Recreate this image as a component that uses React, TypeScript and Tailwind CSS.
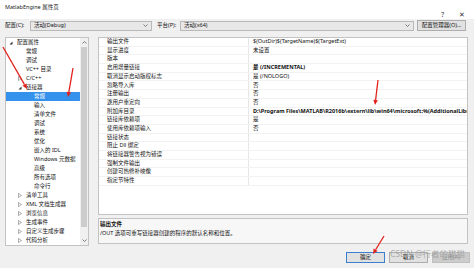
import React from "react";

type TreeItem = { t: string; level: 0 | 1 | 2; exp?: "open" | "closed"; sel?: boolean };

const tree: TreeItem[] = [
  { t: "配置属性", level: 0, exp: "open" },
  { t: "常规", level: 1 },
  { t: "调试", level: 1 },
  { t: "VC++ 目录", level: 1 },
  { t: "C/C++", level: 1, exp: "closed" },
  { t: "链接器", level: 1, exp: "open" },
  { t: "常规", level: 2, sel: true },
  { t: "输入", level: 2 },
  { t: "清单文件", level: 2 },
  { t: "调试", level: 2 },
  { t: "系统", level: 2 },
  { t: "优化", level: 2 },
  { t: "嵌入的 IDL", level: 2 },
  { t: "Windows 元数据", level: 2 },
  { t: "高级", level: 2 },
  { t: "所有选项", level: 2 },
  { t: "命令行", level: 2 },
  { t: "清单工具", level: 1, exp: "closed" },
  { t: "XML 文档生成器", level: 1, exp: "closed" },
  { t: "浏览信息", level: 1, exp: "closed" },
  { t: "生成事件", level: 1, exp: "closed" },
  { t: "自定义生成步骤", level: 1, exp: "closed" },
  { t: "代码分析", level: 1, exp: "closed" },
];

const props: { n: string; v: string; b?: boolean }[] = [
  { n: "输出文件", v: "$(OutDir)$(TargetName)$(TargetExt)" },
  { n: "显示进度", v: "未设置" },
  { n: "版本", v: "" },
  { n: "启用增量链接", v: "是 (/INCREMENTAL)", b: true },
  { n: "取消显示启动版权标志", v: "是 (/NOLOGO)" },
  { n: "忽略导入库", v: "否" },
  { n: "注册输出", v: "否" },
  { n: "逐用户重定向", v: "否" },
  {
    n: "附加库目录",
    v: "D:\\Program Files\\MATLAB\\R2016b\\extern\\lib\\win64\\microsoft;%(AdditionalLibraryDirectories)",
    b: true,
  },
  { n: "链接库依赖项", v: "是" },
  { n: "使用库依赖项输入", v: "否" },
  { n: "链接状态", v: "" },
  { n: "阻止 Dll 绑定", v: "" },
  { n: "将链接器警告视为错误", v: "" },
  { n: "强制文件输出", v: "" },
  { n: "创建可热修补映像", v: "" },
  { n: "指定节特性", v: "" },
];

const indent = ["pl-[3px]", "pl-[12px]", "pl-[20px]"];

function Chevron({ up = false }: { up?: boolean }) {
  return (
    <svg width="5" height="3" viewBox="0 0 5 3" className="block">
      <polyline
        points={up ? "0.5,2.5 2.5,0.5 4.5,2.5" : "0.5,0.5 2.5,2.5 4.5,0.5"}
        fill="none"
        stroke="#606060"
        strokeWidth="0.8"
      />
    </svg>
  );
}

function Expander({ kind }: { kind?: "open" | "closed" }) {
  if (!kind) return <span className="w-[8px] shrink-0" />;
  return (
    <span className="w-[8px] shrink-0 flex items-center">
      {kind === "open" ? (
        <svg width="4" height="4" viewBox="0 0 4 4">
          <polygon points="3.5,0.5 3.5,3.5 0.5,3.5" fill="#333" />
        </svg>
      ) : (
        <svg width="4" height="5" viewBox="0 0 4 5">
          <polygon points="0.5,0.5 3.5,2.5 0.5,4.5" fill="none" stroke="#777" strokeWidth="0.6" />
        </svg>
      )}
    </span>
  );
}

function arrow(x1: number, y1: number, x2: number, y2: number) {
  const dx = x2 - x1;
  const dy = y2 - y1;
  const len = Math.hypot(dx, dy);
  const ux = dx / len;
  const uy = dy / len;
  const hl = 5;
  const hw = 2.3;
  const bx = x2 - ux * hl;
  const by = y2 - uy * hl;
  const p1 = `${bx - uy * hw},${by + ux * hw}`;
  const p2 = `${bx + uy * hw},${by - ux * hw}`;
  return (
    <g key={`${x1}-${y1}`}>
      <line x1={x1} y1={y1} x2={bx} y2={by} stroke="#e3211b" strokeWidth="1.3" />
      <polygon points={`${x2},${y2} ${p1} ${p2}`} fill="#e3211b" />
    </g>
  );
}

export default function App() {
  return (
    <div className="relative w-[474px] h-[268px] overflow-hidden bg-[#f0f0f0] text-[5.5px] leading-none text-[#111] font-['Noto_Sans','Noto_Sans_CJK_SC',sans-serif]">
      {/* title bar */}
      <div className="h-[19px] bg-white flex justify-between pl-[5px] pr-[9px]">
        <div className="pt-[5px] text-[5.5px] text-[#222]">MatlabEngine 属性页</div>
        <div className="flex gap-[15px] pt-[12px] text-[6.5px] text-[#333]">
          <span>?</span>
          <span>✕</span>
        </div>
      </div>

      {/* config row */}
      <div className="flex items-center h-[11px] mt-[1px] pl-[5px]">
        <span className="w-[25px]">配置(C):</span>
        <div className="w-[122px] h-[10px] border border-[#b9b9b9] bg-[#e8e8e8] flex items-center justify-between pl-[3px] pr-[3px]">
          <span>活动(Debug)</span>
          <Chevron />
        </div>
        <span className="w-[23px] ml-[5px]">平台(P):</span>
        <div className="w-[234px] h-[10px] border border-[#b9b9b9] bg-[#e8e8e8] flex items-center justify-between pl-[3px] pr-[3px]">
          <span>活动(x64)</span>
          <Chevron />
        </div>
        <div className="w-[49px] h-[11px] ml-[3px] border border-[#adadad] bg-[#e1e1e1] flex items-center justify-center">
          配置管理器(O)...
        </div>
      </div>

      {/* main */}
      <div className="flex mt-[6px] pl-[5px] gap-[9px]">
        {/* tree */}
        <div className="w-[84px] h-[209px] border border-[#c3c3c3] bg-white flex">
          <div className="flex-1 flex flex-col">
            {tree.map((it, i) => (
              <div
                key={i}
                className={`h-[9px] shrink-0 flex items-center whitespace-nowrap ${indent[it.level]} ${
                  it.sel ? "bg-[#3491ec] text-white" : ""
                }`}
              >
                <Expander kind={it.exp} />
                <span>{it.t}</span>
              </div>
            ))}
          </div>
          <div className="w-[8px] bg-[#f0f0f0] flex flex-col items-center">
            <div className="h-[9px] flex items-center">
              <Chevron up />
            </div>
            <div className="w-[6px] h-[180px] bg-[#cdcdcd]" />
            <div className="flex-1" />
            <div className="h-[9px] flex items-center">
              <Chevron />
            </div>
          </div>
        </div>

        {/* right */}
        <div className="w-[370px] flex flex-col">
          <div className="h-[178px] border border-[#c3c3c3] bg-white flex flex-col overflow-hidden">
            {props.map((p, i) => (
              <div key={i} className="h-[8.7px] shrink-0 flex border-b border-[#f2f2f2]">
                <div className="w-[150px] shrink-0 pl-[8px] flex items-center border-r border-[#e6e6e6] whitespace-nowrap">
                  {p.n}
                </div>
                <div
                  className={`flex-1 pl-[4px] flex items-center whitespace-nowrap overflow-hidden ${
                    p.b ? "font-bold" : ""
                  }`}
                >
                  {p.v}
                </div>
              </div>
            ))}
          </div>
          <div className="h-[3px]" />
          <div className="h-[26px] border border-[#c3c3c3] bg-[#f7f7f7] pl-[1px] pt-[3px] flex flex-col gap-[3px]">
            <span className="font-bold">输出文件</span>
            <span>/OUT 选项可重写链接器创建的程序的默认名称和位置。</span>
          </div>
        </div>
      </div>

      {/* buttons */}
      <div className="flex justify-end gap-[4px] pr-[4px] mt-[6px]">
        <div className="w-[39px] h-[11px] border border-[#3c7fd0] bg-[#e1e1e1] flex items-center justify-center">
          确定
        </div>
        <div className="w-[39px] h-[11px] border border-[#adadad] bg-[#e1e1e1] flex items-center justify-center">
          取消
        </div>
        <div className="w-[38px] h-[11px] border border-[#bfbfbf] bg-[#cccccc] flex items-center justify-center text-[#8a8a8a]">
          应用(A)
        </div>
      </div>

      {/* watermark */}
      <div className="absolute left-[390px] top-[250px] text-[8.5px] text-[#9c9c9c]/80 whitespace-nowrap">
        CSDN @行者的猫猫
      </div>

      {/* annotation arrows */}
      <svg className="absolute inset-0 pointer-events-none" width="474" height="268" viewBox="0 0 474 268">
        {arrow(3, 47, 27, 89)}
        {arrow(73, 68, 68, 97)}
        {arrow(378, 80, 375, 105)}
        {arrow(384, 236, 373, 254)}
      </svg>
    </div>
  );
}
